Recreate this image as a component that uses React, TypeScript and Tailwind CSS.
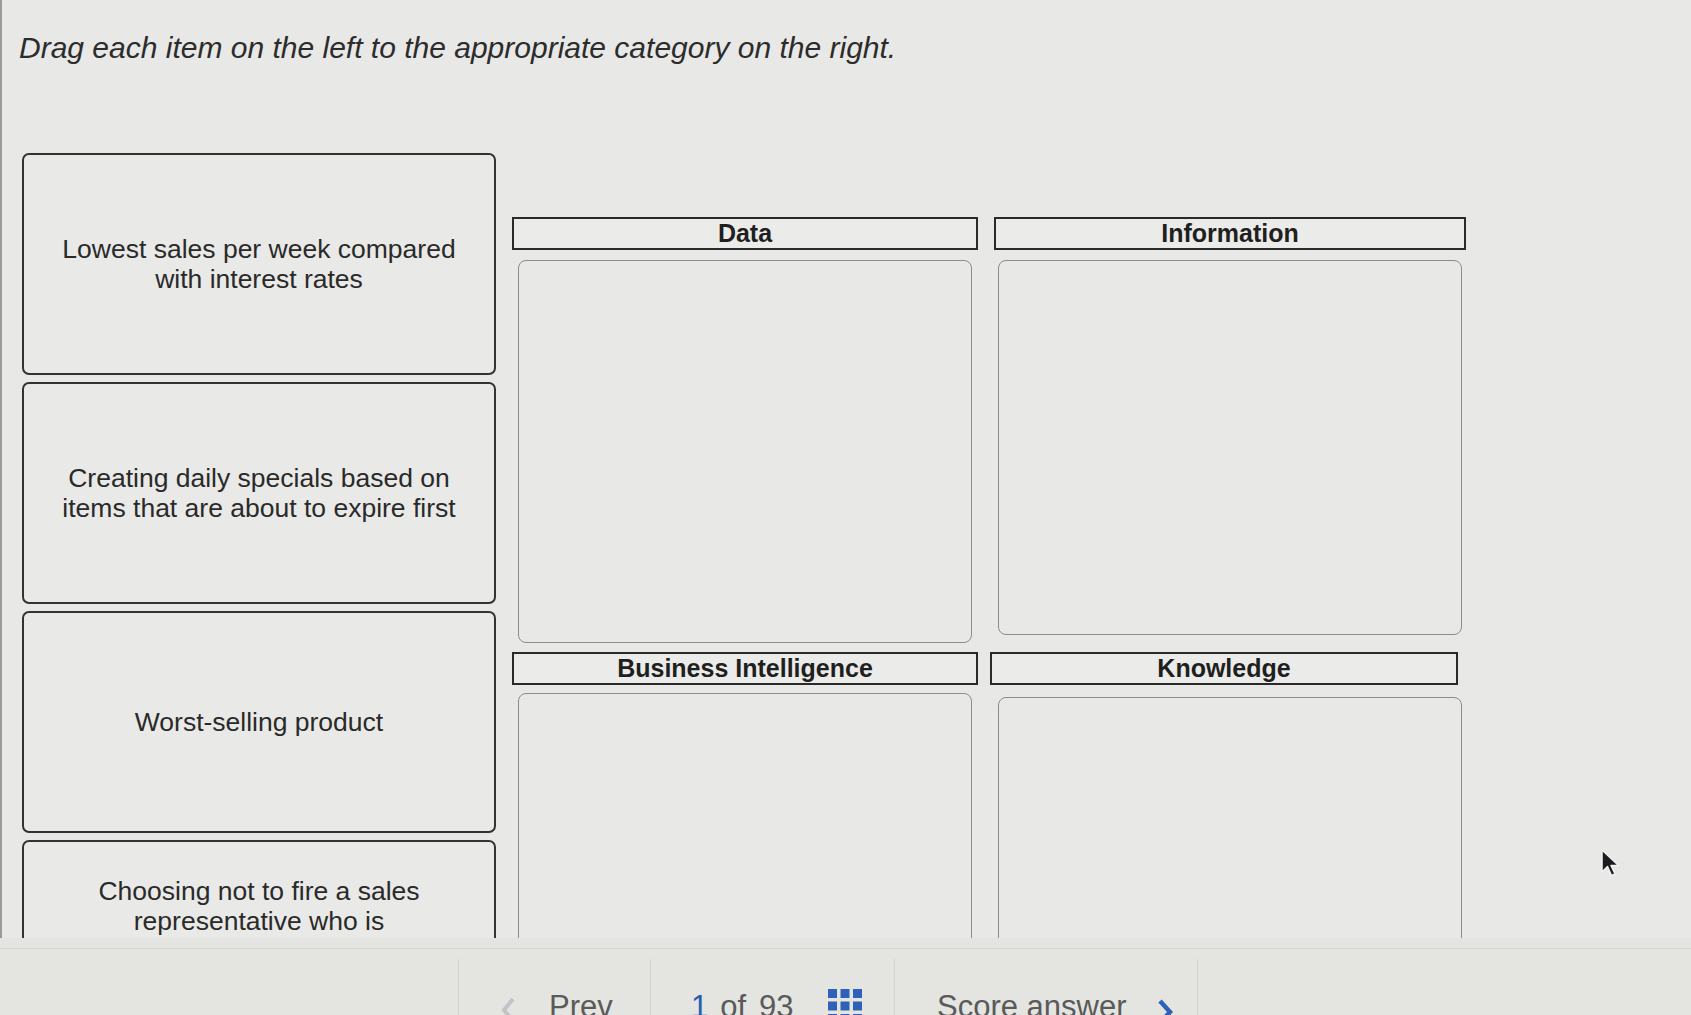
import React from "react";

const items: string[][] = [
  ["Lowest sales per week compared", "with interest rates"],
  ["Creating daily specials based on", "items that are about to expire first"],
  ["Worst-selling product"],
  [
    "Choosing not to fire a sales",
    "representative who is",
    "underperforming knowing that",
    "person is experiencing family",
    "problems",
  ],
];

const Header: React.FC<{ label: string; className?: string }> = ({ label, className }) => (
  <div
    className={
      "h-[33px] border-2 border-[#2a2a2a] bg-[#ebebe9] flex items-center justify-center text-[25px] font-bold text-[#1f1f1f] leading-none " +
      (className ?? "")
    }
  >
    {label}
  </div>
);

const DropBox: React.FC<{ className?: string }> = ({ className }) => (
  <div className={"border-[1.5px] border-[#8c8c8a] rounded-[8px] bg-[#e8e8e6] " + (className ?? "")} />
);

const App: React.FC = () => {
  return (
    <div className="h-screen w-full flex flex-col bg-[#e8e8e6] text-[#2a2a2a] font-['Liberation_Sans',Arial,sans-serif] overflow-hidden relative">
      <main className="h-[938px] shrink-0 overflow-hidden border-l-2 border-[#9a9a98]">
        <h1 className="pl-[17px] pt-[33px] text-[30px] leading-[30px] italic text-[#2c2c2c]">
          Drag each item on the left to the appropriate category on the right.
        </h1>

        <div className="flex gap-4 mt-[90px] pl-[20px]">
          {/* items to drag */}
          <div className="w-[474px] flex flex-col gap-[7px]">
            {items.map((lines, i) => (
              <div
                key={i}
                className="h-[222px] shrink-0 border-2 border-[#333] rounded-[7px] bg-[#e9e9e7] flex flex-col items-center justify-center text-[26.5px] leading-[30px] text-center"
              >
                {lines.map((l) => (
                  <span key={l}>{l}</span>
                ))}
              </div>
            ))}
          </div>

          {/* categories */}
          <div className="mt-[64px] grid grid-cols-[466px_472px] gap-x-4">
            <div className="flex flex-col">
              <Header label="Data" />
              <DropBox className="mt-[10px] h-[383px] mx-[6px]" />
              <Header label="Business Intelligence" className="mt-[9px]" />
              <DropBox className="mt-[8px] h-[300px] mx-[6px]" />
            </div>
            <div className="flex flex-col">
              <Header label="Information" />
              <DropBox className="mt-[10px] h-[375px] mx-[4px]" />
              <Header label="Knowledge" className="mt-[17px] mr-[8px] -ml-[4px]" />
              <DropBox className="mt-[12px] h-[300px] mx-[4px]" />
            </div>
          </div>
        </div>
      </main>

      <footer className="flex-1 bg-[#e4e4e0] pt-[10px]">
        <div className="h-full border-t border-[#d6d6d2] pt-[10px]">
          <div className="h-full flex pl-[458px] text-[31px] leading-[30px] text-[#5a5a5a]">
            <div className="w-[192px] h-full border-l border-[#d2d2ce] flex items-start gap-[33px] pl-[41px] pt-[33px]">
              <svg width="16" height="28" viewBox="0 0 16 28" className="mt-[4px]">
                <polyline points="13,3 4,14 13,25" fill="none" stroke="#c4c4c8" strokeWidth="4" />
              </svg>
              <span>Prev</span>
            </div>
            <div className="w-[244px] h-full border-l border-[#d2d2ce] flex items-start pl-[40px] pt-[33px]">
              <span className="text-[#2b5fae]">1</span>
              <span className="ml-[12px]">of</span>
              <span className="ml-[13px]">93</span>
              <svg width="34" height="36" viewBox="0 0 34 36" className="ml-[34px] -mt-[3px]">
                {[0, 1, 2].map((r) =>
                  [0, 1, 2].map((c) => (
                    <rect key={r + "-" + c} x={c * 12.5} y={r * 12.5} width="9" height="9" fill="#2d62b8" />
                  ))
                )}
              </svg>
            </div>
            <div className="w-[304px] h-full border-l border-r border-[#d2d2ce] flex items-start pl-[42px] pt-[33px]">
              <span>Score answer</span>
              <svg width="20" height="28" viewBox="0 0 20 28" className="ml-[28px] mt-[6px]">
                <polyline points="5,3 15,14 5,25" fill="none" stroke="#2d62b8" strokeWidth="4.5" />
              </svg>
            </div>
          </div>
        </div>
      </footer>

      {/* mouse pointer over the page */}
      <svg width="22" height="30" viewBox="0 0 22 30" className="absolute left-[1600px] top-[848px]">
        <path
          d="M2 2 L2 24 L7.5 18.5 L11.5 27.5 L15 26 L11 17.5 L18.5 17.5 Z"
          fill="#1c1c1e"
          stroke="#f2f2f2"
          strokeWidth="1.5"
          strokeLinejoin="round"
        />
      </svg>
    </div>
  );
};

export default App;
